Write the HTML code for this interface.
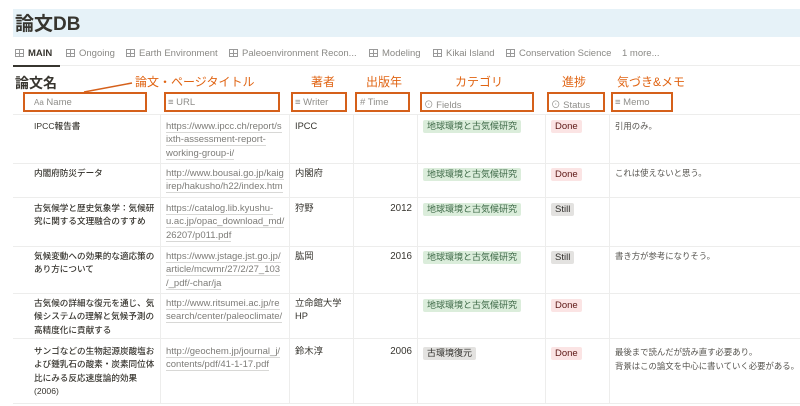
<!DOCTYPE html>
<html><head><meta charset="utf-8"><style>
*{margin:0;padding:0;box-sizing:border-box}
body{width:800px;height:406px;background:#fff;position:relative;overflow:hidden;font-family:"Liberation Sans","Noto Sans CJK JP",sans-serif;color:#37352f}
.a{position:absolute;white-space:nowrap}
.band{left:13px;top:9px;width:787px;height:28px;background:#e6f2f8}
.tab{top:48px;font-size:9.5px;color:#8a8985}
.ti{display:inline-block;width:9px;height:8px;border:1px solid #999;vertical-align:-1px;margin-right:4px;background:linear-gradient(#999,#999) center/100% 1px no-repeat,linear-gradient(#999,#999) center/1px 100% no-repeat}
.or{color:#e06413;font-size:12px;top:73px}
.box{border:2px solid #d5601a;height:20px;top:92px}
.hd{top:97px;font-size:9.5px;color:#8f8e8a}
.vl{width:1px;background:#ededec;top:114px;height:289px}
.hl{left:13px;width:787px;height:1px;background:#ededec}
.c{font-size:9.8px;line-height:13.4px}
.nm{left:34px;width:124px;white-space:normal;font-weight:500;font-size:8.6px;color:#37352f}
.url{left:166px;width:125px;color:#7d7c78;font-size:9.5px}
.url span{border-bottom:1px solid #d8d8d6}
.wr{left:295px;width:52px;white-space:normal;font-size:9.3px}
.tm{left:360px;width:52px;text-align:right}
.tag{font-size:9px;padding:0 4px;height:13px;line-height:13px;border-radius:2px}
.g{background:#dbeddb;color:#3f6a48;left:423px}
.d{background:#fbe4e4;color:#5d1715;left:551px;font-size:9.5px}
.s{background:#e3e2e0;color:#32302c;left:551px;font-size:9.5px}
.m{left:615px;color:#55534e;font-size:8.4px}
</style></head><body>
<div class="a band"></div>
<div class="a" style="left:15px;top:11px;font-size:19px;line-height:28px;font-weight:bold;color:#37352f">論文DB</div>
<div class="a tab" style="left:15px;color:#37352f;font-weight:bold"><span class="ti"></span>MAIN</div>
<div class="a tab" style="left:66px"><span class="ti"></span>Ongoing</div>
<div class="a tab" style="left:126px"><span class="ti"></span>Earth Environment</div>
<div class="a tab" style="left:229px"><span class="ti"></span>Paleoenvironment Recon...</div>
<div class="a tab" style="left:369px"><span class="ti"></span>Modeling</div>
<div class="a tab" style="left:433px"><span class="ti"></span>Kikai Island</div>
<div class="a tab" style="left:506px"><span class="ti"></span>Conservation Science</div>
<div class="a tab" style="left:622px">1 more...</div>
<div class="a" style="left:13px;top:65px;width:787px;height:1px;background:#ededec"></div>
<div class="a" style="left:13px;top:65px;width:47px;height:2px;background:#37352f"></div>
<div class="a" style="left:15px;top:73px;font-size:14px;font-weight:bold">論文名</div>
<svg class="a" style="left:0;top:0" width="800" height="120"><line x1="84" y1="92" x2="132" y2="83" stroke="#d5601a" stroke-width="1.5"/></svg>
<div class="a or" style="left:135px">論文・ページタイトル</div>
<div class="a or" style="left:311px">著者</div>
<div class="a or" style="left:366px">出版年</div>
<div class="a or" style="left:455px">カテゴリ</div>
<div class="a or" style="left:562px">進捗</div>
<div class="a or" style="left:617px">気づき&amp;メモ</div>
<div class="a box" style="left:23px;width:124px"></div>
<div class="a box" style="left:164px;width:116px"></div>
<div class="a box" style="left:291px;width:56px"></div>
<div class="a box" style="left:355px;width:55px"></div>
<div class="a box" style="left:420px;width:114px"></div>
<div class="a box" style="left:547px;width:58px"></div>
<div class="a box" style="left:611px;width:62px"></div>
<div class="a hd" style="left:34px"><span style="font-size:8px">Aa</span> Name</div>
<div class="a hd" style="left:168px">≡ URL</div>
<div class="a hd" style="left:295px">≡ Writer</div>
<div class="a hd" style="left:360px"># Time</div>
<div class="a hd" style="left:424px">⊙ Fields</div>
<div class="a hd" style="left:551px">⊙ Status</div>
<div class="a hd" style="left:615px">≡ Memo</div>
<div class="a hl" style="top:114px"></div>
<div class="a hl" style="top:163px"></div>
<div class="a hl" style="top:197px"></div>
<div class="a hl" style="top:246px"></div>
<div class="a hl" style="top:293px"></div>
<div class="a hl" style="top:338px"></div>
<div class="a hl" style="top:403px"></div>
<div class="a vl" style="left:160px"></div>
<div class="a vl" style="left:289px"></div>
<div class="a vl" style="left:353px"></div>
<div class="a vl" style="left:417px"></div>
<div class="a vl" style="left:545px"></div>
<div class="a vl" style="left:609px"></div>

<div class="a c nm" style="top:120px">IPCC報告書</div>
<div class="a c url" style="top:120px"><span>https://www.ipcc.ch/report/s</span><br><span>ixth-assessment-report-</span><br><span>working-group-i/</span></div>
<div class="a c wr" style="top:120px">IPCC</div>
<div class="a tag g" style="top:120px">地球環境と古気候研究</div>
<div class="a tag d" style="top:120px">Done</div>
<div class="a c m" style="top:120px">引用のみ。</div>

<div class="a c nm" style="top:167px">内閣府防災データ</div>
<div class="a c url" style="top:167px"><span>http://www.bousai.go.jp/kaig</span><br><span>irep/hakusho/h22/index.htm</span></div>
<div class="a c wr" style="top:167px">内閣府</div>
<div class="a tag g" style="top:168px">地球環境と古気候研究</div>
<div class="a tag d" style="top:168px">Done</div>
<div class="a c m" style="top:167px">これは使えないと思う。</div>

<div class="a c nm" style="top:202px">古気候学と歴史気象学：気候研究に関する文理融合のすすめ</div>
<div class="a c url" style="top:202px"><span>https://catalog.lib.kyushu-</span><br><span>u.ac.jp/opac_download_md/</span><br><span>26207/p011.pdf</span></div>
<div class="a c wr" style="top:202px">狩野</div>
<div class="a c tm" style="top:202px">2012</div>
<div class="a tag g" style="top:203px">地球環境と古気候研究</div>
<div class="a tag s" style="top:203px">Still</div>

<div class="a c nm" style="top:250px">気候変動への効果的な適応策のあり方について</div>
<div class="a c url" style="top:250px"><span>https://www.jstage.jst.go.jp/</span><br><span>article/mcwmr/27/2/27_103</span><br><span>/_pdf/-char/ja</span></div>
<div class="a c wr" style="top:250px">肱岡</div>
<div class="a c tm" style="top:250px">2016</div>
<div class="a tag g" style="top:251px">地球環境と古気候研究</div>
<div class="a tag s" style="top:251px">Still</div>
<div class="a c m" style="top:250px">書き方が参考になりそう。</div>

<div class="a c nm" style="top:297px">古気候の詳細な復元を通じ、気候システムの理解と気候予測の高精度化に貢献する</div>
<div class="a c url" style="top:297px"><span>http://www.ritsumei.ac.jp/re</span><br><span>search/center/paleoclimate/</span></div>
<div class="a c wr" style="top:297px">立命館大学<br>HP</div>
<div class="a tag g" style="top:299px">地球環境と古気候研究</div>
<div class="a tag d" style="top:299px">Done</div>

<div class="a c nm" style="top:345px">サンゴなどの生物起源炭酸塩および鍾乳石の酸素・炭素同位体比にみる反応速度論的効果(2006)</div>
<div class="a c url" style="top:345px"><span>http://geochem.jp/journal_j/</span><br><span>contents/pdf/41-1-17.pdf</span></div>
<div class="a c wr" style="top:345px">鈴木淳</div>
<div class="a c tm" style="top:345px">2006</div>
<div class="a tag s" style="top:347px;left:423px;font-size:9px">古環境復元</div>
<div class="a tag d" style="top:347px">Done</div>
<div class="a c m" style="top:345px;line-height:14px">最後まで読んだが読み直す必要あり。<br>背景はこの論文を中心に書いていく必要がある。</div>
</body></html>
